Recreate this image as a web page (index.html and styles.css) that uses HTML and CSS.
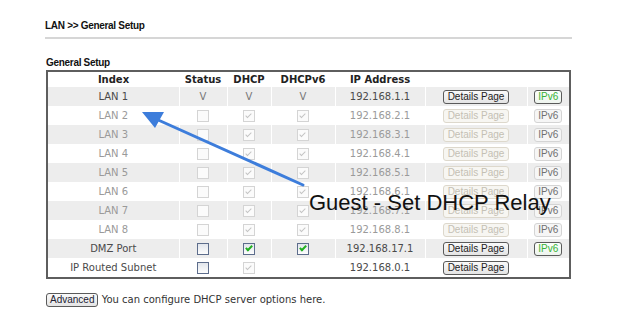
FILE: index.html
```html
<!DOCTYPE html>
<html lang="en">
<head>
    <meta charset="UTF-8">
    <meta name="viewport" content="width=device-width, initial-scale=1.0">
    <title>LAN - General Setup</title>
    <link rel="stylesheet" href="styles.css">
</head>
<body>
    <div class="page">
        <h1 class="title">LAN &gt;&gt; General Setup</h1>

        <h2 class="section-title">General Setup</h2>
        <table class="lan-table">
            <thead>
                <tr>
                    <th class="c-index">Index</th>
                    <th class="c-status">Status</th>
                    <th class="c-dhcp">DHCP</th>
                    <th class="c-dhcp6">DHCPv6</th>
                    <th class="c-ip">IP Address</th>
                    <th class="c-details"></th>
                    <th class="c-ipv6"></th>
                </tr>
            </thead>
            <tbody>
                <tr class="alt">
                    <td class="name">LAN 1</td>
                    <td class="mark">V</td>
                    <td class="mark">V</td>
                    <td class="mark">V</td>
                    <td class="ip">192.168.1.1</td>
                    <td><span class="btn">Details Page</span></td>
                    <td><span class="btn v6">IPv6</span></td>
                </tr>
                <tr class="off">
                    <td>LAN 2</td>
                    <td><span class="cb"></span></td>
                    <td><span class="cb checked"></span></td>
                    <td><span class="cb checked"></span></td>
                    <td>192.168.2.1</td>
                    <td><span class="btn">Details Page</span></td>
                    <td><span class="btn v6">IPv6</span></td>
                </tr>
                <tr class="off alt">
                    <td>LAN 3</td>
                    <td><span class="cb"></span></td>
                    <td><span class="cb checked"></span></td>
                    <td><span class="cb checked"></span></td>
                    <td>192.168.3.1</td>
                    <td><span class="btn">Details Page</span></td>
                    <td><span class="btn v6">IPv6</span></td>
                </tr>
                <tr class="off">
                    <td>LAN 4</td>
                    <td><span class="cb"></span></td>
                    <td><span class="cb checked"></span></td>
                    <td><span class="cb checked"></span></td>
                    <td>192.168.4.1</td>
                    <td><span class="btn">Details Page</span></td>
                    <td><span class="btn v6">IPv6</span></td>
                </tr>
                <tr class="off alt">
                    <td>LAN 5</td>
                    <td><span class="cb"></span></td>
                    <td><span class="cb checked"></span></td>
                    <td><span class="cb checked"></span></td>
                    <td>192.168.5.1</td>
                    <td><span class="btn">Details Page</span></td>
                    <td><span class="btn v6">IPv6</span></td>
                </tr>
                <tr class="off">
                    <td>LAN 6</td>
                    <td><span class="cb"></span></td>
                    <td><span class="cb checked"></span></td>
                    <td><span class="cb checked"></span></td>
                    <td>192.168.6.1</td>
                    <td><span class="btn">Details Page</span></td>
                    <td><span class="btn v6">IPv6</span></td>
                </tr>
                <tr class="off alt">
                    <td>LAN 7</td>
                    <td><span class="cb"></span></td>
                    <td><span class="cb checked"></span></td>
                    <td><span class="cb checked"></span></td>
                    <td>192.168.7.1</td>
                    <td><span class="btn">Details Page</span></td>
                    <td><span class="btn v6">IPv6</span></td>
                </tr>
                <tr class="off">
                    <td>LAN 8</td>
                    <td><span class="cb"></span></td>
                    <td><span class="cb checked"></span></td>
                    <td><span class="cb checked"></span></td>
                    <td>192.168.8.1</td>
                    <td><span class="btn">Details Page</span></td>
                    <td><span class="btn v6">IPv6</span></td>
                </tr>
                <tr class="alt">
                    <td>DMZ Port</td>
                    <td><span class="cb live"></span></td>
                    <td><span class="cb live checked"></span></td>
                    <td><span class="cb live checked"></span></td>
                    <td>192.168.17.1</td>
                    <td><span class="btn">Details Page</span></td>
                    <td><span class="btn v6">IPv6</span></td>
                </tr>
                <tr>
                    <td>IP Routed Subnet</td>
                    <td><span class="cb live"></span></td>
                    <td><span class="cb dim checked"></span></td>
                    <td></td>
                    <td>192.168.0.1</td>
                    <td><span class="btn">Details Page</span></td>
                    <td></td>
                </tr>
            </tbody>
        </table>

        <p class="advanced">
            <span class="btn">Advanced</span>
            You can configure DHCP server options here.
        </p>
    </div>

    <!-- callout drawn over the table -->
    <svg class="callout-arrow" width="617" height="312" viewBox="0 0 617 312">
        <line x1="303" y1="185" x2="156" y2="119" stroke="#3d7ddb" stroke-width="3" stroke-linecap="round"/>
        <polygon points="142,112 164,112 155,128" fill="#3d7ddb"/>
    </svg>
    <div class="callout-text">Guest - Set DHCP Relay</div>
</body>
</html>
```

FILE: styles.css
```css
body {
    margin: 0;
    padding: 0;
    background: #fff;
    font-family: "DejaVu Sans", Verdana, sans-serif;
    color: #333;
}

.page {
    width: 527px;
    padding: 20px 0 0 45px;
}

.title {
    margin: 0;
    padding: 0 0 5px 0;
    font: bold 10px/12px "Liberation Sans", Arial, sans-serif;
    letter-spacing: -0.3px;
    color: #111;
    border-bottom: 2px solid #d6d6d6;
}

.section-title {
    margin: 18px 0 1px 1px;
    font: bold 10px/12px "Liberation Sans", Arial, sans-serif;
    letter-spacing: -0.3px;
    color: #111;
}

/* LAN list */
.lan-table {
    margin-left: 1px;
    width: 525px;
    border: 2px solid #5e5e5e;
    border-collapse: collapse;
    font-size: 10px;
}

.lan-table th {
    height: 15px;
    padding: 0;
    font-weight: bold;
    color: #222;
    text-align: center;
}

.lan-table td {
    height: 19px;
    padding: 0;
    text-align: center;
    color: #4a4a4a;
    border-right: 1px solid #fff;
}

.lan-table tr.alt td {
    background: #ededed;
}

.lan-table tr.off td {
    color: #9a9a9a;
}

.c-index { width: 131px; }
.c-status { width: 48px; }
.c-dhcp { width: 44px; }
.c-dhcp6 { width: 64px; }
.c-ip { width: 90px; }
.c-details { width: 102px; }
.c-ipv6 { width: 42px; }

.lan-table td.mark {
    color: #777;
}

/* checkboxes */
.cb {
    display: inline-block;
    position: relative;
    width: 10px;
    height: 10px;
    vertical-align: middle;
    border: 1px solid #d4d4d4;
    background: #fbfbfb;
}

.cb.live {
    border-color: #5d6d8c;
    background: linear-gradient(#e2e6ec, #fdfdfd);
}

.cb.checked::after {
    content: "";
    position: absolute;
    left: 3px;
    top: 1px;
    width: 2px;
    height: 5px;
    border: solid #c4c4c4;
    border-width: 0 1px 1px 0;
    transform: rotate(45deg);
}

.cb.live.checked::after {
    border-color: #21b021;
    border-width: 0 2px 2px 0;
    left: 3px;
    top: 0;
}

/* buttons */
.btn {
    display: inline-block;
    height: 12px;
    padding: 0 3px;
    font: 10px/12px "Liberation Sans", Arial, sans-serif;
    color: #222;
    border: 1px solid #5a5a5a;
    border-radius: 3px;
    background: linear-gradient(#fafafa, #e4e4e4);
    vertical-align: middle;
}

.lan-table .btn {
    width: 58px;
}

.lan-table .btn.v6 {
    width: 20px;
    padding: 0 3px;
    color: #37b337;
    background: linear-gradient(#fbfffb, #eef4ee);
}

.lan-table tr.off .btn {
    color: #c4c0b4;
    border-color: #ddd8cc;
    background: #f7f6f2;
}

.lan-table tr.off .btn.v6 {
    color: #707070;
    border-color: #d4d4d4;
    background: #f6f6f6;
}

.advanced {
    margin: 14px 0 0 1px;
    font-size: 10px;
    line-height: 14px;
    color: #333;
}

.advanced .btn {
    padding: 0 3px;
    color: #223;
}

/* callout overlay */
.callout-arrow {
    position: absolute;
    left: 0;
    top: 0;
    pointer-events: none;
}

.callout-text {
    position: absolute;
    left: 309px;
    top: 191px;
    font: 22px/24px "Liberation Sans", Arial, sans-serif;
    color: #111;
    white-space: nowrap;
}
```
